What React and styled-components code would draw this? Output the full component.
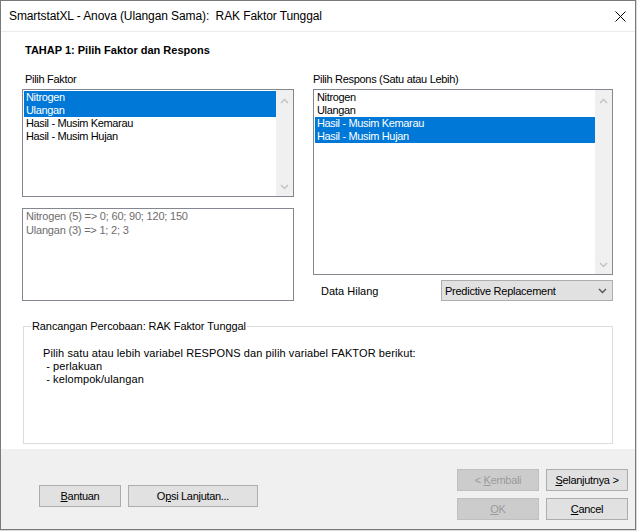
import React from "react";
import styled, { createGlobalStyle } from "styled-components";

const GlobalStyle = createGlobalStyle`
  html, body {
    margin: 0;
    padding: 0;
    background: #d9d9d9;
  }
  body {
    font-family: "Liberation Sans", Arial, sans-serif;
    font-size: 11px;
    color: #000;
  }
`;

const Window = styled.div`
  width: 636px;
  height: 530px;
  box-sizing: border-box;
  border: 1px solid #7a7a7a;
  background: #f0f0f0;
  display: flex;
  flex-direction: column;
`;

const TitleBar = styled.div`
  height: 30px;
  background: #fff;
  border-bottom: 1px solid #ebebeb;
  display: flex;
  align-items: center;
  justify-content: space-between;
  padding: 0 9px 0 8px;
`;

const TitleText = styled.span`
  font-size: 12px;
  letter-spacing: -0.1px;
  white-space: pre;
`;

const Body = styled.div`
  flex: 1;
  background: #fff;
  padding: 11px 22px 0 21px;
  display: flex;
  flex-direction: column;
`;

const Heading = styled.div`
  font-weight: bold;
  font-size: 11px;
  line-height: 14px;
  padding-left: 3px;
`;

const Columns = styled.div`
  display: grid;
  grid-template-columns: 272px 300px;
  column-gap: 19px;
  margin-top: 16px;
`;

const Column = styled.div`
  display: flex;
  flex-direction: column;
`;

const Label = styled.div`
  line-height: 13px;
  letter-spacing: -0.3px;
  padding-left: ${(p) => p.$indent || 0}px;
  margin-bottom: 3px;
`;

const ListBox = styled.div`
  height: ${(p) => p.$height}px;
  box-sizing: border-box;
  border: 1px solid #828790;
  display: flex;
  background: #fff;
`;

const ListItems = styled.div`
  flex: 1;
  padding: 1px 0 0 1px;
`;

const ListItem = styled.div`
  height: 13px;
  line-height: 13px;
  padding-left: 2px;
  letter-spacing: -0.35px;
  white-space: nowrap;
  background: ${(p) => (p.$selected ? "#0078d7" : "transparent")};
  color: ${(p) => (p.$selected ? "#fff" : "#000")};
`;

const ScrollBar = styled.div`
  width: 17px;
  background: #f0f0f0;
  display: flex;
  flex-direction: column;
  justify-content: space-between;
  align-items: center;
  padding: 8px 0 6px;
`;

const ValuesBox = styled.div`
  height: 93px;
  box-sizing: border-box;
  margin-top: 11px;
  border: 1px solid #828790;
  padding: 0 3px;
  color: #6d6d6d;
  line-height: 14px;
  letter-spacing: -0.2px;
`;

const OptionRow = styled.div`
  display: flex;
  align-items: center;
  justify-content: space-between;
  margin-top: 5px;
  padding-left: 8px;
`;

const Combo = styled.div`
  width: 172px;
  height: 21px;
  box-sizing: border-box;
  background: #e1e1e1;
  border: 1px solid #adadad;
  display: flex;
  align-items: center;
  justify-content: space-between;
  padding: 0 5px 0 3px;
  letter-spacing: -0.25px;
`;

const GroupBox = styled.fieldset`
  margin: 19px 0 0 1px;
  width: 590px;
  height: 124px;
  box-sizing: border-box;
  border: 1px solid #dcdcdc;
  padding: 14px 0 0 19px;
  min-inline-size: 0;
`;

const GroupTitle = styled.legend`
  margin-left: -12px;
  padding: 0 1px;
  line-height: 13px;
  letter-spacing: -0.1px;
`;

const GroupText = styled.div`
  white-space: pre;
  line-height: 13px;
  letter-spacing: 0.1px;
`;

const Footer = styled.div`
  height: 80px;
  box-sizing: border-box;
  display: flex;
  justify-content: space-between;
  align-items: flex-start;
  padding: 20px 7px 0 38px;
`;

const ButtonGroup = styled.div`
  display: flex;
  gap: 7px;
  margin-top: ${(p) => p.$top || 0}px;
`;

const ButtonGrid = styled.div`
  display: grid;
  grid-template-columns: 82px 82px;
  column-gap: 7px;
  row-gap: 7px;
`;

const Button = styled.div`
  width: ${(p) => p.$width || 82}px;
  height: 22px;
  box-sizing: border-box;
  display: flex;
  align-items: center;
  justify-content: center;
  border: 1px solid ${(p) => (p.$disabled ? "#bfbfbf" : "#adadad")};
  background: ${(p) => (p.$disabled ? "#cccccc" : "#e1e1e1")};
  color: ${(p) => (p.$disabled ? "#9b9b9b" : "#000")};
  letter-spacing: -0.3px;
  white-space: pre;
`;

const Chevron = ({ up, color = "#c2c2c2" }) => (
  <svg width="9" height="6" viewBox="0 0 9 6">
    <path
      d={up ? "M1 5 L4.5 1.5 L8 5" : "M1 1 L4.5 4.5 L8 1"}
      fill="none"
      stroke={color}
      strokeWidth="1.4"
    />
  </svg>
);

const CloseIcon = () => (
  <svg width="11" height="11" viewBox="0 0 11 11">
    <path d="M0.5 0.5 L10.5 10.5 M10.5 0.5 L0.5 10.5" stroke="#000" strokeWidth="1" />
  </svg>
);

const variables = ["Nitrogen", "Ulangan", "Hasil - Musim Kemarau", "Hasil - Musim Hujan"];

const List = ({ height, selected }) => (
  <ListBox $height={height}>
    <ListItems>
      {variables.map((v, i) => (
        <ListItem key={v} $selected={selected.includes(i)}>
          {v}
        </ListItem>
      ))}
    </ListItems>
    <ScrollBar>
      <Chevron up />
      <Chevron />
    </ScrollBar>
  </ListBox>
);

const App = () => {
  return (
    <>
      <GlobalStyle />
      <Window>
        <TitleBar>
          <TitleText>SmartstatXL - Anova (Ulangan Sama):  RAK Faktor Tunggal</TitleText>
          <CloseIcon />
        </TitleBar>
        <Body>
          <Heading>TAHAP 1: Pilih Faktor dan Respons</Heading>
          <Columns>
            <Column>
              <Label $indent={3}>Pilih Faktor</Label>
              <List height={108} selected={[0, 1]} />
              <ValuesBox>
                <div>Nitrogen (5) =&gt; 0; 60; 90; 120; 150</div>
                <div>Ulangan (3) =&gt; 1; 2; 3</div>
              </ValuesBox>
            </Column>
            <Column>
              <Label>Pilih Respons (Satu atau Lebih)</Label>
              <List height={186} selected={[2, 3]} />
              <OptionRow>
                <span>Data Hilang</span>
                <Combo>
                  <span>Predictive Replacement</span>
                  <Chevron color="#555" />
                </Combo>
              </OptionRow>
            </Column>
          </Columns>
          <GroupBox>
            <GroupTitle>Rancangan Percobaan: RAK Faktor Tunggal</GroupTitle>
            <GroupText>
              {"Pilih satu atau lebih variabel RESPONS dan pilih variabel FAKTOR berikut:\n - perlakuan\n - kelompok/ulangan"}
            </GroupText>
          </GroupBox>
        </Body>
        <Footer>
          <ButtonGroup $top={16}>
            <Button>
              <u>B</u>antuan
            </Button>
            <Button $width={130}>
              O<u>p</u>si Lanjutan...
            </Button>
          </ButtonGroup>
          <ButtonGrid>
            <Button $disabled>
              {"< "}<u>K</u>embali
            </Button>
            <Button>
              <u>S</u>elanjutnya &gt;
            </Button>
            <Button $disabled>
              <u>O</u>K
            </Button>
            <Button>
              <u>C</u>ancel
            </Button>
          </ButtonGrid>
        </Footer>
      </Window>
    </>
  );
};

export default App;
